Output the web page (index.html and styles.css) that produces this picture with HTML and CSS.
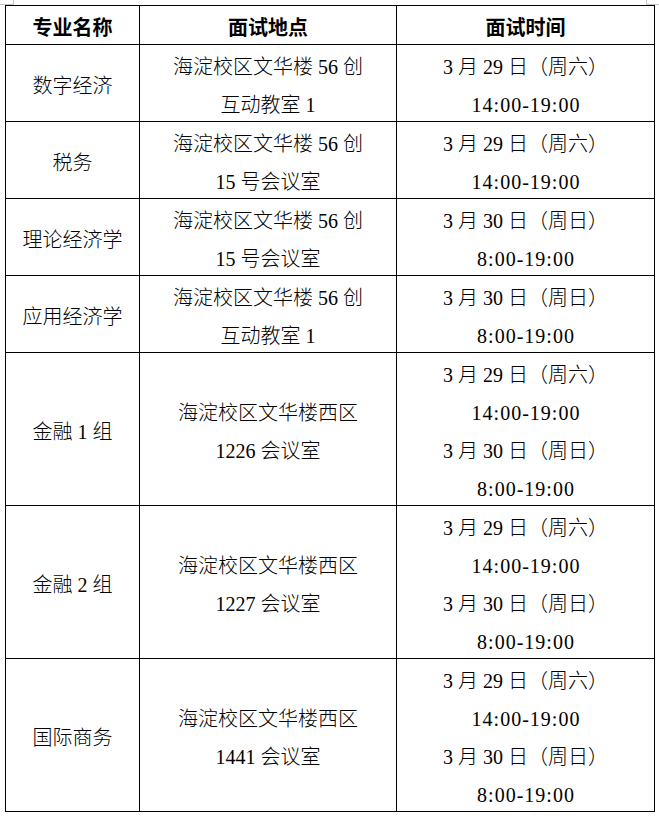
FILE: index.html
```html
<!DOCTYPE html>
<html lang="zh-CN">
<head>
<meta charset="utf-8">
<title>面试安排</title>
<link rel="stylesheet" href="styles.css">
</head>
<body>
<div class="marks">
  <span class="mark mark-left"></span>
  <span class="mark mark-right"></span>
</div>
<div class="sheet">
  <div class="cell head"><p>专业名称</p></div>
  <div class="cell head"><p>面试地点</p></div>
  <div class="cell head"><p>面试时间</p></div>

  <div class="cell"><p>数字经济</p></div>
  <div class="cell"><p>海淀校区文华楼 56 创<br>互动教室 1</p></div>
  <div class="cell"><p>3 月 29 日（周六）<br><span class="time">14:00-19:00</span></p></div>

  <div class="cell"><p>税务</p></div>
  <div class="cell"><p>海淀校区文华楼 56 创<br>15 号会议室</p></div>
  <div class="cell"><p>3 月 29 日（周六）<br><span class="time">14:00-19:00</span></p></div>

  <div class="cell"><p>理论经济学</p></div>
  <div class="cell"><p>海淀校区文华楼 56 创<br>15 号会议室</p></div>
  <div class="cell"><p>3 月 30 日（周日）<br><span class="time">8:00-19:00</span></p></div>

  <div class="cell"><p>应用经济学</p></div>
  <div class="cell"><p>海淀校区文华楼 56 创<br>互动教室 1</p></div>
  <div class="cell"><p>3 月 30 日（周日）<br><span class="time">8:00-19:00</span></p></div>

  <div class="cell"><p>金融 1 组</p></div>
  <div class="cell"><p>海淀校区文华楼西区<br>1226 会议室</p></div>
  <div class="cell"><p>3 月 29 日（周六）<br><span class="time">14:00-19:00</span><br>3 月 30 日（周日）<br><span class="time">8:00-19:00</span></p></div>

  <div class="cell"><p>金融 2 组</p></div>
  <div class="cell"><p>海淀校区文华楼西区<br>1227 会议室</p></div>
  <div class="cell"><p>3 月 29 日（周六）<br><span class="time">14:00-19:00</span><br>3 月 30 日（周日）<br><span class="time">8:00-19:00</span></p></div>

  <div class="cell"><p>国际商务</p></div>
  <div class="cell"><p>海淀校区文华楼西区<br>1441 会议室</p></div>
  <div class="cell"><p>3 月 29 日（周六）<br><span class="time">14:00-19:00</span><br>3 月 30 日（周日）<br><span class="time">8:00-19:00</span></p></div>
</div>
</body>
</html>
```

FILE: styles.css
```css
html, body {
  margin: 0;
  padding: 0;
  background: #ffffff;
}

body {
  font-family: "Liberation Serif", "Noto Sans CJK SC", serif;
  font-size: 20px;
  font-weight: 300;
  color: #000000;
}

.marks {
  display: flex;
  justify-content: space-between;
  width: 659px;
  height: 5px;
}

.mark {
  display: block;
  box-sizing: border-box;
  height: 5px;
  border-bottom: 1px solid #c4c4c4;
}

.mark-left {
  width: 14px;
  border-right: 1px solid #c4c4c4;
}

.mark-right {
  width: 13px;
  border-left: 1px solid #c4c4c4;
}

.sheet {
  display: grid;
  grid-template-columns: 133px 256px 257px;
  grid-template-rows: 38px 76px 76px 76px 76px 152px 152px 152px;
  gap: 1px;
  padding: 1px;
  margin-left: 5px;
  width: max-content;
  background: #000000;
}

.cell {
  background: #ffffff;
  display: flex;
  flex-direction: column;
  justify-content: center;
  text-align: center;
  line-height: 38px;
  padding-top: 5px;
  box-sizing: border-box;
  white-space: nowrap;
}

.cell p {
  margin: 0;
}

.time {
  letter-spacing: 1px;
  margin-right: -1px;
}

.head {
  font-weight: 700;
}
```
